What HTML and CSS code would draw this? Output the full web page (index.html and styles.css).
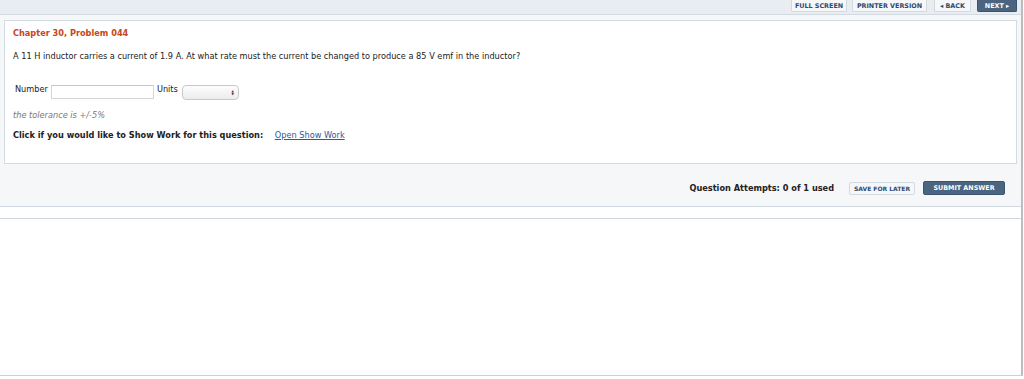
FILE: index.html
```html
<!DOCTYPE html>
<html lang="en">
<head>
    <meta charset="UTF-8">
    <title>Chapter 30, Problem 044</title>
    <link rel="stylesheet" href="styles.css">
</head>
<body>
    <div class="pagina">
        <!-- barra de cima -->
        <div class="barra-topo">
            <button class="bt-claro bt-full">FULL SCREEN</button>
            <button class="bt-claro bt-printer">PRINTER VERSION</button>
            <button class="bt-claro bt-back">&#9666; BACK</button>
            <button class="bt-escuro bt-next">NEXT &#9656;</button>
        </div>

        <!-- area da questao -->
        <div class="area-questao">
            <div class="questao">
                <h1>Chapter 30, Problem 044</h1>
                <p class="enunciado">A 11 H inductor carries a current of 1.9 A. At what rate must the current be changed to produce a 85 V emf in the inductor?</p>

                <div class="resposta">
                    <label>Number</label>
                    <input type="text" class="campo-numero">
                    <label class="rotulo-units">Units</label>
                    <span class="seletor"><span class="setas">&#9650;<br>&#9660;</span></span>
                </div>

                <p class="tolerancia">the tolerance is +/-5%</p>
                <p class="show-work"><strong>Click if you would like to Show Work for this question:</strong> <a href="#">Open Show Work</a></p>
            </div>
        </div>

        <!-- rodape com tentativas -->
        <div class="rodape">
            <span class="tentativas">Question Attempts: 0 of 1 used</span>
            <button class="bt-claro bt-save">SAVE FOR LATER</button>
            <button class="bt-escuro bt-submit">SUBMIT ANSWER</button>
        </div>
        <div class="faixa"></div>
    </div>
</body>
</html>
```

FILE: styles.css
```css
* {
  margin: 0;
  padding: 0;
  box-sizing: border-box;
}

body {
  background: white;
  font-family: "DejaVu Sans", Verdana, sans-serif;
  color: #222;
}

.pagina {
  width: 1023px;
  height: 376px;
  border-right: 2px solid #bdbdbd;
  border-bottom: 1px solid #cfcfcf;
}

.barra-topo {
  height: 15px;
  background-color: #e9ecf0;
  border-bottom: 1px solid #d4dae1;
  display: flex;
  justify-content: flex-end;
  align-items: flex-start;
  padding-right: 4px;
}

button {
  font-family: "DejaVu Sans", Verdana, sans-serif;
  font-weight: bold;
  font-size: 6.4px;
  height: 12px;
  padding: 0;
  border-radius: 2px;
  cursor: pointer;
}

.bt-claro {
  background-color: #f5f7f9;
  border: 1px solid #d3d9e0;
  color: #2c4a72;
}

.bt-escuro {
  background-color: #4b6480;
  border: 1px solid #3d5470;
  color: white;
}

.barra-topo button {
  border-top: none;
  border-radius: 0 0 2px 2px;
}

.barra-topo .bt-full {
  width: 56px;
}

.barra-topo .bt-printer {
  width: 75px;
  margin-left: 5px;
}

.barra-topo .bt-back {
  margin-left: 7px;
  width: 37px;
}

.barra-topo .bt-next {
  margin-left: 6px;
  width: 40px;
}

.area-questao {
  background-color: #f6f7f9;
  padding: 5px 4px 0 4px;
}

.questao {
  background-color: white;
  border: 1px solid #d3dbe3;
  width: 1013px;
  height: 144px;
  padding: 7px 8px;
}

.questao h1 {
  font-size: 8.2px;
  line-height: 10px;
  color: #c8461a;
  margin-bottom: 13px;
}

.enunciado {
  font-size: 8.2px;
  line-height: 10px;
  margin-bottom: 20px;
}

.resposta {
  display: flex;
  align-items: flex-start;
  font-size: 8.2px;
  line-height: 10px;
  height: 18px;
}

.resposta label {
  margin-top: 3px;
  margin-left: 2px;
}

.campo-numero {
  width: 103px;
  height: 14px;
  margin-left: 3px;
  margin-top: 4px;
  border: 1px solid #d6d6d6;
  border-top-color: #c6c6c6;
}

.resposta .rotulo-units {
  margin-left: 3px;
}

.seletor {
  width: 57px;
  height: 15px;
  margin-left: 4px;
  margin-top: 4px;
  border: 1px solid #c9c9c9;
  border-radius: 4px;
  background: linear-gradient(to bottom, #fdfdfd, #ececec);
  display: flex;
  justify-content: flex-end;
  align-items: center;
  padding-right: 4px;
}

.setas {
  font-size: 3px;
  line-height: 3px;
  color: #333;
}

.tolerancia {
  font-size: 8.2px;
  line-height: 10px;
  font-style: italic;
  color: #777;
  margin-top: 11px;
}

.show-work {
  font-size: 8.2px;
  line-height: 10px;
  margin-top: 10px;
}

.show-work strong {
  margin-right: 9px;
}

.show-work a {
  color: #2a5a9c;
}

.rodape {
  height: 43px;
  background-color: #f6f7f9;
  border-bottom: 1px solid #d0d7df;
  display: flex;
  justify-content: flex-end;
  align-items: center;
  padding: 6px 16px 0 0;
}

.tentativas {
  font-size: 8.2px;
  font-weight: bold;
  margin-right: 15px;
}

.bt-save {
  width: 66px;
  height: 13px;
  font-size: 6px;
}

.bt-submit {
  width: 82px;
  height: 14px;
  margin-left: 8px;
  font-size: 6.4px;
  border-radius: 2px;
}

.faixa {
  height: 12px;
  border-bottom: 1px solid #d0d7df;
}
```
